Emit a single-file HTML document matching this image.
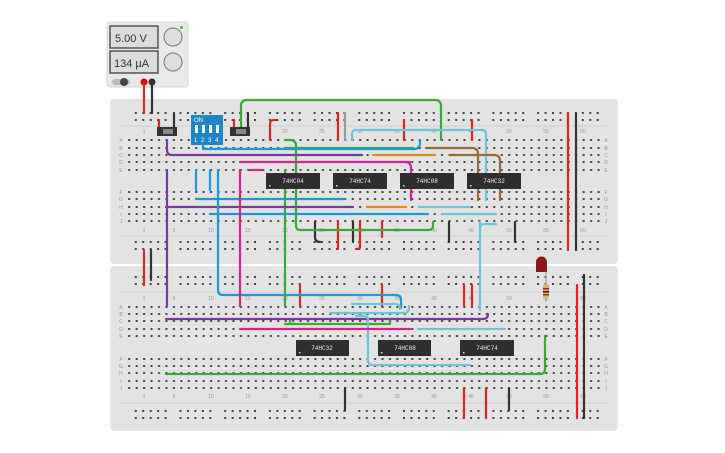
<!DOCTYPE html>
<html><head><meta charset="utf-8"><style>
html,body{margin:0;padding:0;background:#fff;width:725px;height:453px;overflow:hidden;font-family:"Liberation Sans",sans-serif}
</style></head><body>
<svg width="725" height="453" viewBox="0 0 725 453" xmlns="http://www.w3.org/2000/svg" font-family="Liberation Sans, sans-serif">
<defs>
<pattern id="h" x="125.5" y="0" width="7.45" height="453" patternUnits="userSpaceOnUse"><rect x="2.7" y="0" width="2" height="453" fill="#444"/></pattern>
<pattern id="r" x="134.8" y="0" width="44.7" height="453" patternUnits="userSpaceOnUse">
<rect x="0" width="2" height="453" fill="#444"/><rect x="7.45" width="2" height="453" fill="#444"/><rect x="14.9" width="2" height="453" fill="#444"/><rect x="22.35" width="2" height="453" fill="#444"/><rect x="29.8" width="2" height="453" fill="#444"/></pattern>
</defs>
<rect x="107" y="22" width="81" height="65" rx="3" fill="#e9e9e9" stroke="#d4d4d4"/>
<rect x="110" y="26" width="48" height="22" fill="#dcdcdc" stroke="#555" stroke-width="1.5"/>
<text x="115" y="42" font-size="11" fill="#333">5.00 V</text>
<rect x="110" y="51" width="48" height="22" fill="#dcdcdc" stroke="#555" stroke-width="1.5"/>
<text x="114" y="67" font-size="11" fill="#333">134 µA</text>
<circle cx="173" cy="37" r="9" fill="#ddd" stroke="#777"/><circle cx="173" cy="62" r="9" fill="#ddd" stroke="#777"/>
<rect x="180" y="26" width="3" height="3" fill="#4c4"/>
<rect x="112" y="79" width="18" height="6" rx="3" fill="#bbb"/><circle cx="124" cy="82" r="4" fill="#444"/>
<circle cx="144" cy="82" r="3.5" fill="#c11"/><circle cx="152" cy="82" r="3.5" fill="#333"/>
<rect x="110" y="99" width="508" height="165" rx="4" fill="#e3e3e3"/>
<rect x="110" y="266" width="508" height="165" rx="4" fill="#e3e3e3"/>
<g stroke="#cfcfcf" stroke-width="1"><line x1="120" y1="126" x2="608" y2="126"/><line x1="120" y1="236" x2="608" y2="236"/><line x1="120" y1="292" x2="608" y2="292"/><line x1="120" y1="403" x2="608" y2="403"/></g>
<g fill="url(#r)">
<rect x="130" y="112" width="470" height="2"/><rect x="130" y="119" width="470" height="2"/>
<rect x="130" y="241" width="470" height="2"/><rect x="130" y="248" width="470" height="2"/>
<rect x="130" y="276" width="470" height="2"/><rect x="130" y="283" width="470" height="2"/>
<rect x="130" y="410" width="470" height="2"/><rect x="130" y="417" width="470" height="2"/>
</g>
<g fill="url(#h)">
<rect x="126" y="139" width="478" height="2"/><rect x="126" y="147" width="478" height="2"/><rect x="126" y="154" width="478" height="2"/><rect x="126" y="161" width="478" height="2"/><rect x="126" y="169" width="478" height="2"/>
<rect x="126" y="191" width="478" height="2"/><rect x="126" y="198" width="478" height="2"/><rect x="126" y="206" width="478" height="2"/><rect x="126" y="213" width="478" height="2"/><rect x="126" y="220" width="478" height="2"/>
<rect x="126" y="306" width="478" height="2"/><rect x="126" y="313" width="478" height="2"/><rect x="126" y="320" width="478" height="2"/><rect x="126" y="328" width="478" height="2"/><rect x="126" y="335" width="478" height="2"/>
<rect x="126" y="358" width="478" height="2"/><rect x="126" y="365" width="478" height="2"/><rect x="126" y="372" width="478" height="2"/><rect x="126" y="380" width="478" height="2"/><rect x="126" y="387" width="478" height="2"/>
</g>
<g font-size="5" fill="#999" text-anchor="middle">
<text x="144" y="133">1</text><text x="174" y="133">5</text><text x="211" y="133">10</text><text x="248" y="133">15</text><text x="285" y="133">20</text><text x="322" y="133">25</text><text x="360" y="133">30</text><text x="397" y="133">35</text><text x="434" y="133">40</text><text x="471" y="133">45</text><text x="509" y="133">50</text><text x="546" y="133">55</text><text x="583" y="133">60</text>
<text x="144" y="232">1</text><text x="174" y="232">5</text><text x="211" y="232">10</text><text x="248" y="232">15</text><text x="285" y="232">20</text><text x="322" y="232">25</text><text x="360" y="232">30</text><text x="397" y="232">35</text><text x="434" y="232">40</text><text x="471" y="232">45</text><text x="509" y="232">50</text><text x="546" y="232">55</text><text x="583" y="232">60</text>
<text x="144" y="300">1</text><text x="174" y="300">5</text><text x="211" y="300">10</text><text x="248" y="300">15</text><text x="285" y="300">20</text><text x="322" y="300">25</text><text x="360" y="300">30</text><text x="397" y="300">35</text><text x="434" y="300">40</text><text x="471" y="300">45</text><text x="509" y="300">50</text><text x="546" y="300">55</text><text x="583" y="300">60</text>
<text x="144" y="398">1</text><text x="174" y="398">5</text><text x="211" y="398">10</text><text x="248" y="398">15</text><text x="285" y="398">20</text><text x="322" y="398">25</text><text x="360" y="398">30</text><text x="397" y="398">35</text><text x="434" y="398">40</text><text x="471" y="398">45</text><text x="509" y="398">50</text><text x="546" y="398">55</text><text x="583" y="398">60</text>
<text x="121" y="142">A</text><text x="121" y="150">B</text><text x="121" y="157">C</text><text x="121" y="164">D</text><text x="121" y="172">E</text>
<text x="121" y="194">F</text><text x="121" y="201">G</text><text x="121" y="209">H</text><text x="121" y="216">I</text><text x="121" y="223">J</text>
<text x="606" y="142">A</text><text x="606" y="150">B</text><text x="606" y="157">C</text><text x="606" y="164">D</text><text x="606" y="172">E</text>
<text x="606" y="194">F</text><text x="606" y="201">G</text><text x="606" y="209">H</text><text x="606" y="216">I</text><text x="606" y="223">J</text>
<text x="121" y="309">A</text><text x="121" y="316">B</text><text x="121" y="323">C</text><text x="121" y="331">D</text><text x="121" y="338">E</text>
<text x="121" y="361">F</text><text x="121" y="368">G</text><text x="121" y="375">H</text><text x="121" y="383">I</text><text x="121" y="390">J</text>
<text x="606" y="309">A</text><text x="606" y="316">B</text><text x="606" y="323">C</text><text x="606" y="331">D</text><text x="606" y="338">E</text>
<text x="606" y="361">F</text><text x="606" y="368">G</text><text x="606" y="375">H</text><text x="606" y="383">I</text><text x="606" y="390">J</text>
</g>
<g fill="none" stroke-width="2.2" stroke-linecap="round" stroke-linejoin="round">
<path d="M144 84V113 M159 120V133 M234 120V130 M270 140V124Q270 120 274 120H276 M338 113V140 M404 120V140 M472 120V140 M568 113V250 M338 222V249 M360 222V247Q360 249 356 249 M382 222V237 M144 250V285 M300 285V306 M382 285V306 M464 285V306 M472 285V306 M464 388V418 M486 388V418 M577 285V418" stroke="#e02424"/>
<path d="M152 84V113 M174 113V130 M248 113V130 M315 222V237Q315 242 320 242 M353 222V242 M449 222V242 M515 222V242 M576 113V250 M151 250V280 M345 388V410 M509 388V410 M584 275V418" stroke="#333"/>
<path d="M345 113V140" stroke="#999"/>
<path d="M241 133V106Q241 100 247 100H435Q441 100 441 106V140 M285 140H290Q296 140 296 146V226Q296 230 300 230H428Q433 230 433 226V222 M285 148H413 M285 170V306 M166 374H540Q545 374 545 369V336 M285 324H390Q390 324 390 320 M290 320V324" stroke="#3aaa35"/>
<path d="M167 140V150Q167 155 172 155H362 M167 170V306 M166 319H483Q488 319 488 314 M167 190V175 M166 207H353" stroke="#7a3a9a"/>
<path d="M203 140V149H414Q420 149 420 143V140 M196 170V190 M210 170V190 M218 170V290Q218 295 223 295H396Q401 295 401 300V308 M196 199H345 M210 214H428" stroke="#1a9ad6"/>
<path d="M352 140V134Q352 130 356 130H482Q486 130 486 134V200 M480 222V228Q480 224 484 224H496 M480 228V310 M442 214H496 M419 207H470 M330 313H405Q409 313 409 306 M356 316H365Q368 316 368 321V360Q368 365 373 365H470 M418 329H505 M352 304H395Q400 304 400 309" stroke="#6cc6d8"/>
<path d="M240 162H410 M240 170V306 M250 170H262 M405 162Q411 162 411 168V200 M240 329H410" stroke="#d0268e"/>
<path d="M373 155H435 M367 207H406" stroke="#e8891a"/>
<path d="M426 148H472Q478 148 478 154V200 M450 155H494Q500 155 500 161V200" stroke="#9a6a3a"/>
</g>
<rect x="157" y="127" width="20" height="9" fill="#333"/><rect x="163" y="129" width="10" height="5" fill="#888"/>
<rect x="230" y="127" width="20" height="9" fill="#333"/><rect x="236" y="129" width="10" height="5" fill="#888"/>
<rect x="191" y="115" width="32" height="30" fill="#1d86c9"/>
<text x="194" y="122" font-size="6" fill="#fff">ON</text>
<g fill="#fff"><rect x="195" y="125" width="3" height="8"/><rect x="202" y="125" width="3" height="8"/><rect x="209" y="125" width="3" height="8"/><rect x="216" y="125" width="3" height="8"/></g>
<g font-size="6" fill="#fff"><text x="194" y="142">1</text><text x="201" y="142">2</text><text x="208" y="142">3</text><text x="215" y="142">4</text></g>
<g fill="#2e2e2e"><rect x="266" y="173" width="54" height="16"/><rect x="333" y="173" width="54" height="16"/><rect x="400" y="173" width="54" height="16"/><rect x="467" y="173" width="54" height="16"/>
<rect x="296" y="340" width="53" height="16"/><rect x="378" y="340" width="53" height="16"/><rect x="460" y="340" width="54" height="16"/></g>
<g fill="#ddd"><rect x="269" y="185" width="1.5" height="1.5"/><rect x="336" y="185" width="1.5" height="1.5"/><rect x="403" y="185" width="1.5" height="1.5"/><rect x="470" y="185" width="1.5" height="1.5"/><rect x="299" y="352" width="1.5" height="1.5"/><rect x="381" y="352" width="1.5" height="1.5"/><rect x="463" y="352" width="1.5" height="1.5"/></g>
<g font-size="6" fill="#eee" text-anchor="middle" font-family="Liberation Mono, monospace">
<text x="293" y="183">74HC04</text><text x="360" y="183">74HC74</text><text x="427" y="183">74HC08</text><text x="494" y="183">74HC32</text>
<text x="322" y="350">74HC32</text><text x="405" y="350">74HC08</text><text x="487" y="350">74HC74</text></g>
<path d="M536 272V262a5.5 5.5 0 0 1 11 0V272Z" fill="#8b1a1a"/>
<line x1="546" y1="272" x2="546" y2="302" stroke="#999" stroke-width="1"/>
<rect x="543" y="284" width="6" height="14" rx="2" fill="#d8b070"/>
<rect x="543" y="288" width="6" height="1.5" fill="#c11"/><rect x="543" y="291" width="6" height="1.5" fill="#222"/><rect x="543" y="294" width="6" height="1.5" fill="#7a4a1a"/>
</svg>
</body></html>
